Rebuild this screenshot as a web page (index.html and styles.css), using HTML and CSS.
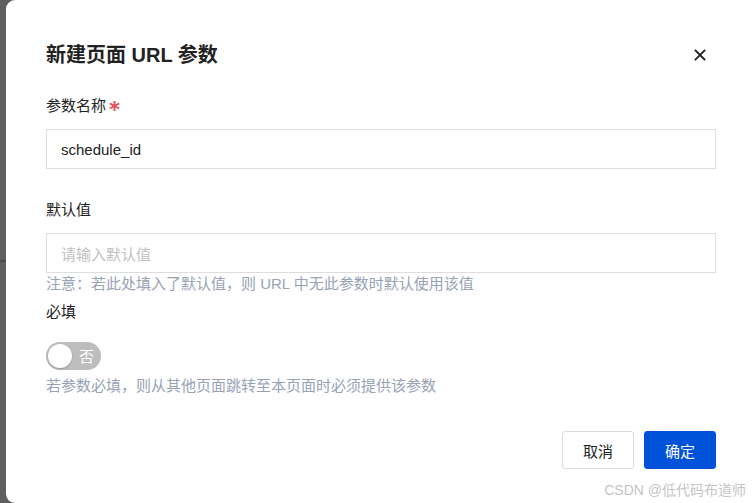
FILE: index.html
```html
<!DOCTYPE html>
<html lang="zh-CN">
<head>
  <meta charset="UTF-8" />
  <meta name="viewport" content="width=device-width, initial-scale=1.0"/>
  <title>新建页面 URL 参数</title>
  <link rel="stylesheet" href="styles.css">
</head>
<body>
  <div class="backdrop"></div>

  <div class="dialog">
    <div class="dialog-header">
      <h2 class="dialog-title">新建页面 URL 参数</h2>
      <button class="close-btn" aria-label="关闭">
        <svg width="12" height="12" viewBox="0 0 12 12">
          <path d="M1.5 1.5 L10.5 10.5 M10.5 1.5 L1.5 10.5" stroke="#222" stroke-width="1.8" stroke-linecap="square"/>
        </svg>
      </button>
    </div>

    <div class="form-item">
      <label class="form-label">参数名称<span class="required">*</span></label>
      <div class="input-box"><span class="input-value">schedule_id</span></div>
    </div>

    <div class="form-item gap-top">
      <label class="form-label">默认值</label>
      <div class="input-box"><span class="input-placeholder">请输入默认值</span></div>
      <p class="form-tip">注意：若此处填入了默认值，则 URL 中无此参数时默认使用该值</p>
    </div>

    <div class="form-item">
      <label class="form-label">必填</label>
      <div class="switch">
        <span class="switch-knob"></span>
        <span class="switch-text">否</span>
      </div>
      <p class="form-tip tip-switch">若参数必填，则从其他页面跳转至本页面时必须提供该参数</p>
    </div>

    <div class="dialog-footer">
      <button class="btn btn-default">取消</button>
      <button class="btn btn-primary">确定</button>
    </div>
  </div>

  <span class="watermark">CSDN @低代码布道师</span>
</body>
</html>
```

FILE: styles.css
```css
html, body {
  margin: 0;
  height: 100%;
}

body {
  display: flex;
  background: #5f5f5f;
  font-family: "Liberation Sans", "Noto Sans CJK SC", sans-serif;
  color: #222222;
  overflow: hidden;
}

/* gray strip on the left */
.backdrop {
  width: 6px;
  flex: none;
  background: linear-gradient(to bottom, #5f5f5f 260px, #4a4a4a 260px, #4a4a4a 262px, #5f5f5f 262px);
}

.dialog {
  flex: 1;
  background: #ffffff;
  border-radius: 9px 0 0 9px;
  padding: 41px 38px 0 40px;
  display: flex;
  flex-direction: column;
}

.dialog-header {
  display: flex;
  align-items: center;
  justify-content: space-between;
  height: 28px;
}

.dialog-title {
  margin: 0;
  font-size: 20px;
  font-weight: bold;
  line-height: 28px;
  color: #222222;
}

.close-btn {
  background: none;
  border: none;
  padding: 0;
  margin-right: 10px;
  width: 12px;
  height: 12px;
  display: flex;
  cursor: pointer;
}

.form-item {
  display: flex;
  flex-direction: column;
}

.form-label {
  font-size: 15px;
  line-height: 22px;
  margin-top: 26px;
  margin-bottom: 12px;
  color: #222222;
  display: flex;
  align-items: center;
}

.gap-top .form-label {
  margin-top: 30px;
}

.required {
  color: #e34d59;
  margin-left: 3px;
  font-family: "DejaVu Sans", sans-serif;
  font-size: 21px;
  font-weight: bold;
  line-height: 22px;
  height: 22px;
  position: relative;
  top: 4px;
}

.input-box {
  height: 38px;
  border: 1px solid #dddddd;
  display: flex;
  align-items: center;
  padding: 0 14px;
  font-size: 15px;
}

.input-value {
  color: #222222;
}

.input-placeholder {
  color: #bfbfbf;
}

.form-tip {
  margin: 0;
  font-size: 15px;
  line-height: 22px;
  color: #98a2b5;
}

.form-item:nth-of-type(4) .form-label {
  margin-top: 6px;
  margin-bottom: 19px;
}

.switch {
  width: 55px;
  height: 28px;
  border-radius: 14px;
  background: #bdbdbd;
  display: flex;
  align-items: center;
  padding: 0 2px;
  box-sizing: border-box;
  gap: 7px;
}

.switch-knob {
  width: 24px;
  height: 24px;
  border-radius: 50%;
  background: #ffffff;
  box-shadow: 0 1px 2px rgba(0, 0, 0, 0.2);
}

.switch-text {
  color: #ffffff;
  font-size: 15px;
  line-height: 1;
}

.tip-switch {
  margin-top: 5px;
}

.dialog-footer {
  display: flex;
  justify-content: flex-end;
  gap: 10px;
  margin-top: 34px;
}

.btn {
  width: 72px;
  height: 38px;
  border-radius: 3px;
  font-size: 15px;
  font-family: inherit;
  cursor: pointer;
}

.btn-default {
  background: #ffffff;
  border: 1px solid #d8dbe3;
  color: #222222;
}

.btn-primary {
  background: #0052d9;
  border: 1px solid #0052d9;
  color: #ffffff;
}

.watermark {
  position: absolute;
  right: 8px;
  bottom: 4px;
  font-size: 14px;
  color: #c4c4c4;
}
```
